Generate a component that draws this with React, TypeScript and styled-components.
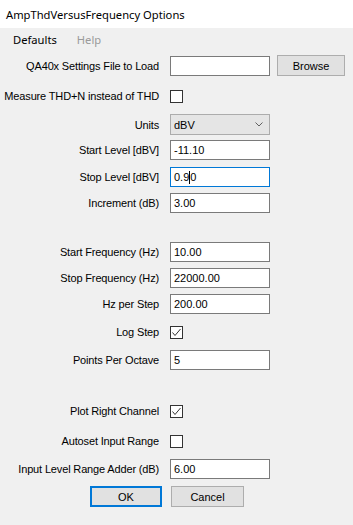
import React from 'react'
import styled, { createGlobalStyle } from 'styled-components'

const GlobalStyle = createGlobalStyle`
  html, body { margin: 0; padding: 0; background: #f0f0f0; }
  body { font-family: "Liberation Sans", Arial, sans-serif; font-size: 11px; color: #000; }
`

/* ─── Window chrome ─────────────────────────────────── */

const Window = styled.div`
  width: 353px;
  height: 525px;
  display: flex;
  flex-direction: column;
  background: #f0f0f0;
  overflow: hidden;
`

const TitleBar = styled.div`
  height: 28px;
  flex-shrink: 0;
  display: flex;
  align-items: center;
  padding-left: 6px;
  background: #fff;
  font-family: "Noto Sans", "Open Sans", sans-serif;
  font-size: 11.2px;
  color: #000;
`

const MenuBar = styled.div`
  height: 22px;
  flex-shrink: 0;
  display: flex;
  align-items: center;
  padding-left: 3px;
  font-family: "Noto Sans", "Open Sans", sans-serif;
  font-size: 11.2px;
`

const MenuItem = styled.span<{ $disabled?: boolean }>`
  padding: 0 10px;
  color: ${p => (p.$disabled ? '#9a9a9a' : '#000')};
`

/* ─── Form ──────────────────────────────────────────── */

const Form = styled.div`
  display: flex;
  flex-direction: column;
  padding-top: 5px;
`

const Row = styled.div<{ $mt: number; $h?: number }>`
  display: grid;
  grid-template-columns: 159px auto;
  column-gap: 11px;
  align-items: center;
  height: ${p => p.$h ?? 20}px;
  margin-top: ${p => p.$mt}px;
`

const Label = styled.span`
  text-align: right;
  white-space: nowrap;
  letter-spacing: -0.15px;
`

const Controls = styled.div`
  display: flex;
  align-items: center;
  gap: 7px;
`

const TextBox = styled.div<{ $focused?: boolean }>`
  box-sizing: border-box;
  width: 100px;
  height: 20px;
  background: #fff;
  border: 1px solid ${p => (p.$focused ? '#0078d7' : '#7a7a7a')};
  padding: 0 3px;
  display: flex;
  align-items: center;
  white-space: nowrap;
`

const Caret = styled.span`
  display: inline-block;
  width: 1px;
  height: 13px;
  background: #000;
`

const Select = styled.div`
  box-sizing: border-box;
  width: 100px;
  height: 21px;
  background: #e5e5e5;
  border: 1px solid #acacac;
  padding: 0 6px 0 3px;
  display: flex;
  align-items: center;
  justify-content: space-between;
`

const Button = styled.div<{ $default?: boolean; $w: number }>`
  box-sizing: border-box;
  width: ${p => p.$w}px;
  height: 21px;
  background: #e1e1e1;
  border: ${p => (p.$default ? '2px solid #0078d7' : '1px solid #adadad')};
  display: flex;
  align-items: center;
  justify-content: center;
`

const Box = styled.div`
  box-sizing: border-box;
  width: 13px;
  height: 13px;
  background: #fff;
  border: 1px solid #333;
  display: flex;
  align-items: center;
  justify-content: center;
`

const ButtonBar = styled.div`
  display: flex;
  gap: 9px;
  padding-left: 90px;
  margin-top: 7px;
`

/* ─── Parts ─────────────────────────────────────────── */

function CheckBox({ checked }: { checked?: boolean }) {
  return (
    <Box>
      {checked && (
        <svg width="11" height="11" viewBox="0 0 11 11">
          <polyline points="1.5,5.5 4,8.5 9.5,2" fill="none" stroke="#333" strokeWidth="1" />
        </svg>
      )}
    </Box>
  )
}

function Chevron() {
  return (
    <svg width="8" height="5" viewBox="0 0 8 5">
      <polyline points="0.5,0.5 4,4 7.5,0.5" fill="none" stroke="#606060" strokeWidth="1" />
    </svg>
  )
}

export default function App() {
  return (
    <Window>
      <GlobalStyle />
      <TitleBar>AmpThdVersusFrequency Options</TitleBar>
      <MenuBar>
        <MenuItem>Defaults</MenuItem>
        <MenuItem $disabled>Help</MenuItem>
      </MenuBar>

      <Form>
        <Row $mt={0} $h={21}>
          <Label>QA40x Settings File to Load</Label>
          <Controls>
            <TextBox />
            <Button $w={68}>Browse</Button>
          </Controls>
        </Row>

        <Row $mt={10}>
          <Label>Measure THD+N instead of THD</Label>
          <CheckBox />
        </Row>

        <Row $mt={8} $h={21}>
          <Label>Units</Label>
          <Select>
            <span>dBV</span>
            <Chevron />
          </Select>
        </Row>

        <Row $mt={5}>
          <Label>Start Level [dBV]</Label>
          <TextBox>-11.10</TextBox>
        </Row>
        <Row $mt={7}>
          <Label>Stop Level [dBV]</Label>
          <TextBox $focused>0.9<Caret />0</TextBox>
        </Row>
        <Row $mt={6}>
          <Label>Increment (dB)</Label>
          <TextBox>3.00</TextBox>
        </Row>

        <Row $mt={29}>
          <Label>Start Frequency (Hz)</Label>
          <TextBox>10.00</TextBox>
        </Row>
        <Row $mt={6}>
          <Label>Stop Frequency (Hz)</Label>
          <TextBox>22000.00</TextBox>
        </Row>
        <Row $mt={6}>
          <Label>Hz per Step</Label>
          <TextBox>200.00</TextBox>
        </Row>
        <Row $mt={8}>
          <Label>Log Step</Label>
          <CheckBox checked />
        </Row>
        <Row $mt={8}>
          <Label>Points Per Octave</Label>
          <TextBox>5</TextBox>
        </Row>

        <Row $mt={31}>
          <Label>Plot Right Channel</Label>
          <CheckBox checked />
        </Row>
        <Row $mt={10}>
          <Label>Autoset Input Range</Label>
          <CheckBox />
        </Row>
        <Row $mt={8}>
          <Label>Input Level Range Adder (dB)</Label>
          <TextBox>6.00</TextBox>
        </Row>

        <ButtonBar>
          <Button $default $w={72}>OK</Button>
          <Button $w={73}>Cancel</Button>
        </ButtonBar>
      </Form>
    </Window>
  )
}
